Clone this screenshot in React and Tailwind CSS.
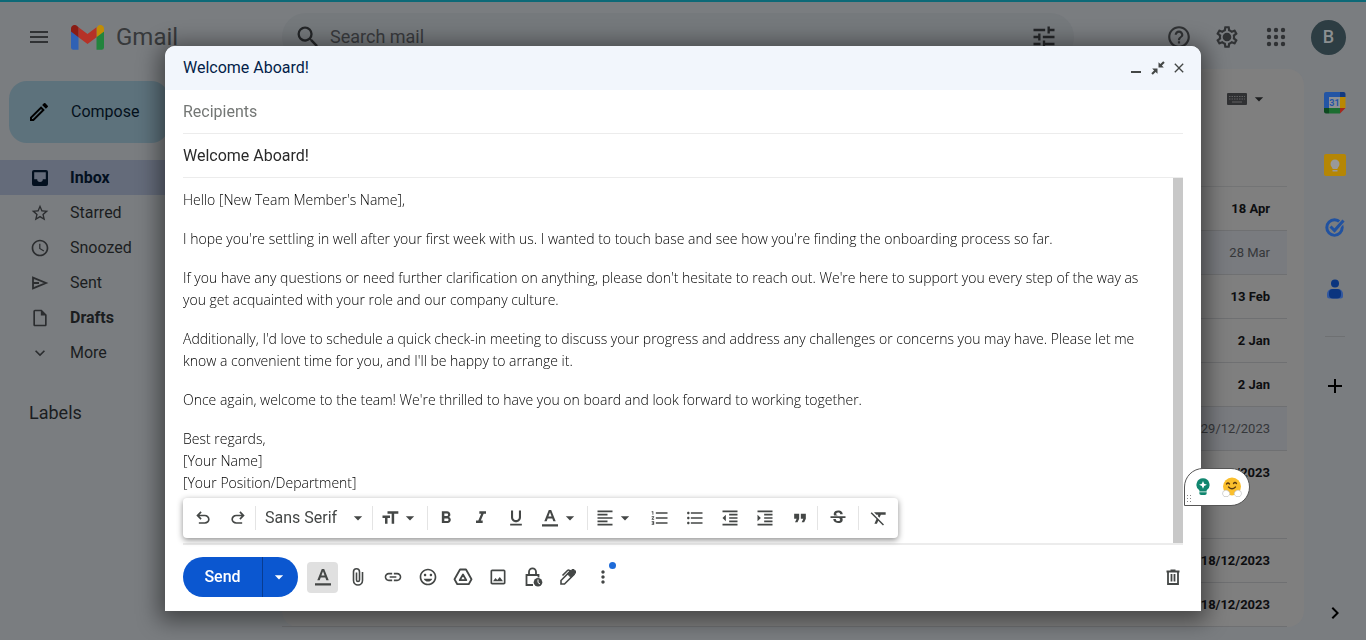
import React from 'react';
import {
  MdMenu, MdSearch, MdTune, MdHelpOutline, MdOutlineSettings, MdStarBorder, MdAccessTime,
  MdOutlineInsertDriveFile, MdExpandMore, MdOutlineModeEdit, MdArrowDropDown,
  MdAdd, MdChevronRight, MdClose, MdFormatSize, MdFormatBold, MdFormatItalic, MdFormatUnderlined,
  MdFormatAlignLeft, MdFormatListNumbered, MdFormatListBulleted, MdFormatIndentDecrease,
  MdFormatIndentIncrease, MdFormatQuote, MdStrikethroughS, MdFormatClear, MdInsertLink,
  MdInsertEmoticon, MdOutlineImage, MdMoreVert,
} from 'react-icons/md';

const InboxIcon = ({ className }) => (
  <svg viewBox="0 0 20 20" className={className} fill="currentColor" aria-hidden="true">
    <path fillRule="evenodd" d="M4 2h12a2 2 0 0 1 2 2v12a2 2 0 0 1-2 2H4a2 2 0 0 1-2-2V4a2 2 0 0 1 2-2zM4.200 4.200v7h3a2.800 2.800 0 0 0 5.600 0h3v-7z" />
  </svg>
);

const SendIcon = ({ className }) => (
  <svg viewBox="0 0 20 20" className={className} fill="none" stroke="currentColor" strokeWidth="1.800" aria-hidden="true">
    <path d="M3 4.600L16 10 3 15.400zM3 10h6" />
  </svg>
);

const navItems = [
  { label: 'Inbox', icon: InboxIcon, active: true, bold: true },
  { label: 'Starred', icon: MdStarBorder },
  { label: 'Snoozed', icon: MdAccessTime },
  { label: 'Sent', icon: SendIcon },
  { label: 'Drafts', icon: MdOutlineInsertDriveFile, bold: true },
  { label: 'More', icon: MdExpandMore },
];

const mails = [
  { date: '18 Apr', unread: true },
  { date: '28 Mar' },
  { date: '13 Feb', unread: true },
  { date: '2 Jan', unread: true },
  { date: '2 Jan', unread: true },
  { date: '29/12/2023' },
  { date: '20/12/2023', unread: true, tall: true },
  { date: '18/12/2023', unread: true },
  { date: '18/12/2023', unread: true },
];

const GmailLogo = () => (
  <svg viewBox="0 0 33 25" className="h-[25px] w-[33px]" aria-hidden="true">
    <path d="M0 6v16.500A2.300 2.300 0 0 0 2.300 24.700H7.500V11.500z" fill="#2f61b5" />
    <path d="M33 6v16.500a2.300 2.300 0 0 1-2.300 2.200H25.500V11.500z" fill="#22843d" />
    <path d="M25.500 3v9.200L33 6.500V3.500C33 .5 29.600-1.100 27.200.700z" fill="#c18d06" />
    <path d="M7.500 12.200V2.200l9 6.700 9-6.700v10l-9 6.800z" fill="#b53227" />
    <path d="M0 3.500v3l7.500 5.700V2.200L5.800.700C3.400-1.100 0 .5 0 3.500z" fill="#8a1c14" />
  </svg>
);

const CalendarIcon = () => (
  <svg viewBox="0 0 22 22" className="size-[22px]" aria-hidden="true">
    <path d="M0 2a2 2 0 0 1 2-2h14v5H5v12H0z" fill="#2355a5" />
    <path d="M16 0h3.500A2 2 0 0 1 21.500 2v3H16z" fill="#133a80" />
    <path d="M16 5h5.500v11H16z" fill="#b98804" />
    <path d="M5 16h11v5.500H5z" fill="#1b6e31" />
    <path d="M0 16h5v5.500H2a2 2 0 0 1-2-2z" fill="#0d4a20" />
    <path d="M16 16h5.500L16 21.500z" fill="#a5281d" />
    <path d="M5 5h11v11H5z" fill="#8d9094" />
    <text x="10.500" y="14" textAnchor="middle" fontSize="9" fontWeight="700" fill="#2355a5" fontFamily="Roboto, sans-serif">31</text>
  </svg>
);

const KeepIcon = () => (
  <svg viewBox="0 0 22 22" className="size-[22px]" aria-hidden="true">
    <rect width="22" height="22" rx="2" fill="#b58605" />
    <circle cx="11" cy="10" r="4.500" fill="#999" />
    <path d="M8.500 12h5v3h-5zM8.500 16h5v1.500h-5z" fill="#999" />
  </svg>
);

const TasksIcon = () => (
  <svg viewBox="0 0 22 22" className="size-[22px]" fill="none" aria-hidden="true">
    <circle cx="10.500" cy="11.500" r="7.700" stroke="#2152a0" strokeWidth="3" />
    <path d="M6.500 10.500l4 4L19 5" stroke="#7b7d80" strokeWidth="5" />
    <path d="M6.500 10.500l4 4L19.500 4.500" stroke="#2152a0" strokeWidth="3" />
  </svg>
);

const ContactsIcon = () => (
  <svg viewBox="0 0 22 22" className="size-[22px]" aria-hidden="true">
    <circle cx="11" cy="5.500" r="4" fill="#0b357f" />
    <path d="M3 16a5 5 0 0 1 5-5h6a5 5 0 0 1 5 5v2a2.500 2.500 0 0 1-2.500 2.500h-11A2.500 2.500 0 0 1 3 18z" fill="#3258a0" />
    <rect x="5" y="11" width="12" height="9.500" rx="4" fill="#0b357f" />
  </svg>
);

const SettingsIcon = () => (
  <svg viewBox="0 0 24 24" className="size-[26px]" fill="currentColor" aria-hidden="true">
    <MdOutlineSettings size={24} />
    <circle cx="12" cy="12" r="3" />
  </svg>
);

const AppsIcon = () => (
  <svg viewBox="0 0 20 20" className="size-5" fill="currentColor" aria-hidden="true">
    {[3, 10, 17].map((y) => [3, 10, 17].map((x) => <circle key={`${x}-${y}`} cx={x} cy={y} r="2.200" />))}
  </svg>
);

const KeyboardIcon = () => (
  <svg viewBox="0 0 20 12" className="h-3 w-5" aria-hidden="true">
    <rect width="20" height="12" rx="1" fill="#303133" />
    <path d="M2 3.500h16M2 6h16" stroke="#606163" strokeWidth="1" strokeDasharray="1.500 1" />
    <path d="M5 9h10" stroke="#606163" strokeWidth="1" />
  </svg>
);

const UndoIcon = ({ className }) => (
  <svg viewBox="0 -960 960 960" className={className} fill="currentColor" aria-hidden="true">
    <path d="M280-200v-80h284q63 0 109.500-40T720-420q0-60-46.500-100T564-560H312l104 104-56 56-200-200 200-200 56 56-104 104h252q97 0 163.500 63T800-420q0 94-66.500 157T564-200H280Z" />
  </svg>
);

const RedoIcon = ({ className }) => (
  <svg viewBox="0 -960 960 960" className={className} fill="currentColor" aria-hidden="true">
    <path d="M396-200q-97 0-163.500-63T160-420q0-94 66.500-157T396-640h252L544-744l56-56 200 200-200 200-56-56 104-104H396q-63 0-109.500 40T240-420q0 60 46.500 100T396-280h284v80H396Z" />
  </svg>
);

const TextColorIcon = ({ className }) => (
  <svg viewBox="0 0 20 20" className={className} fill="currentColor" aria-hidden="true">
    <path d="M2 16.200h16v2.300H2zM8.800 2h2.400l4.500 11.200h-2.400l-1-2.700H7.700l-1 2.700H4.300zM8.400 8.600h3.200L10 4.300z" />
  </svg>
);

const AttachIcon = ({ className }) => (
  <svg viewBox="0 0 20 20" className={className} fill="none" stroke="currentColor" strokeWidth="1.600" aria-hidden="true">
    <path d="M14.500 5v8.500a4.500 4.500 0 0 1-9 0V4.800a3 3 0 0 1 6 0V13a1.500 1.500 0 0 1-3 0V5.500" />
  </svg>
);

const DriveIcon = ({ className }) => (
  <svg viewBox="0 0 20 20" className={className} fill="none" stroke="currentColor" strokeWidth="1.800" strokeLinejoin="round" aria-hidden="true">
    <path d="M7 2.500h6l5.500 9.700-2.800 5H4.300l-2.800-5z" />
    <path d="M10 7.500l3.300 5.700H6.700z" />
  </svg>
);

const LockClockIcon = ({ className }) => (
  <svg viewBox="0 0 20 20" className={className} fill="none" stroke="currentColor" strokeWidth="1.800" aria-hidden="true">
    <path d="M10 18H3.500V8h12v2.500M6 8V4.800a3.500 3.500 0 0 1 7 0V8" />
    <circle cx="15" cy="15.300" r="4.300" fill="currentColor" stroke="none" />
    <path d="M15 12.500v3l2 1.500" stroke="#fff" strokeWidth="1" />
  </svg>
);

const PenIcon = ({ className }) => (
  <svg viewBox="0 0 20 20" className={className} fill="none" stroke="currentColor" aria-hidden="true">
    <path d="M3 17v-3.500L12.500 4l3.500 3.500L6.500 17z" strokeWidth="1.600" />
    <path d="M9.500 7l4.500-4.500h2L17.500 4v2L13 10.500z" fill="currentColor" strokeWidth="1" />
    <path d="M4.500 8.500l5-5q1-1 2 0l1 1" strokeWidth="1.600" />
  </svg>
);

const TrashIcon = ({ className }) => (
  <svg viewBox="0 0 20 20" className={className} fill="none" stroke="currentColor" strokeWidth="1.800" aria-hidden="true">
    <path d="M3.500 4.500h13M7.500 3.300h5M5 4.500V17h10V4.500M8.500 7v7.500M11.500 7v7.500" />
  </svg>
);

const ExitFullscreenIcon = () => (
  <svg viewBox="0 0 14 14" className="size-[14px]" fill="currentColor" aria-hidden="true">
    <path d="M7.500 6.500V1.200l1.900 1.900L12.200.3l1.500 1.500-2.800 2.800 1.900 1.900zM6.500 7.500v5.300l-1.900-1.900-2.800 2.800L.3 12.200l2.800-2.800-1.900-1.900z" />
  </svg>
);

const BulbIcon = () => (
  <svg viewBox="0 0 16 20" className="h-[18px] w-[14px]" aria-hidden="true">
    <path d="M8 0a7.500 7.500 0 0 1 4.200 13.700V15H3.800v-1.300A7.500 7.500 0 0 1 8 0z" fill="#11866f" />
    <path d="M3.800 16h8.400v1a2 2 0 0 1-2 2H5.800a2 2 0 0 1-2-2z" fill="#11866f" />
    <path d="M8 3l1.300 3.200L12.500 7.500 9.300 8.800 8 12 6.700 8.800 3.500 7.500l3.200-1.300z" fill="#fff" />
  </svg>
);

const HugIcon = () => (
  <svg viewBox="0 0 20 20" className="size-5" aria-hidden="true">
    <circle cx="10" cy="9.500" r="9" fill="#fbbf2c" />
    <path d="M4.500 7q1.500-2 3 0M11.500 6.500q1.500-2 3 0M6.500 10q3.500 3.500 7 0" stroke="#5a3a10" strokeWidth="1.300" fill="none" strokeLinecap="round" />
    <path d="M1 14.500q3-3 6 0l1 2.500-2 2.500H2L.5 17zM19 14.500q-3-3-6 0L12 17l2 2.500h4l1.500-2.500z" fill="#fff" stroke="#bbb" strokeWidth=".6" />
  </svg>
);

const ToolButton = ({ label, icon: Icon, dropdown, width = 'w-[35px]' }) => (
  <button type="button" aria-label={label} className={`flex h-8 shrink-0 items-center justify-center ${width}`}>
    <Icon className="size-5 shrink-0" />
    {dropdown && <MdArrowDropDown className="size-5 shrink-0" />}
  </button>
);

const Divider = () => <span className="h-6 w-px shrink-0 bg-[#e4e4e4]" />;

const Header = () => (
  <header className="flex h-[67px] shrink-0 items-center pt-[3px] pr-5 text-[#303234]">
    <div className="flex w-[282px] shrink-0 items-center pl-[27px]">
      <button type="button" aria-label="Main menu"><MdMenu className="size-6" /></button>
      <a href="#gmail" className="ml-5 flex items-center gap-3 text-2xl text-[#37393b]">
        <GmailLogo />
        Gmail
      </a>
    </div>
    <form className="flex h-12 w-[792px] items-center rounded-full bg-[#75797c] px-3">
      <button type="button" aria-label="Search"><MdSearch className="size-7 text-[#242628]" /></button>
      <input aria-label="Search mail" placeholder="Search mail" className="ml-2 min-w-0 flex-1 bg-transparent text-lg placeholder:text-[#393b3e]" />
      <button type="button" aria-label="Search options" className="mr-1"><MdTune className="size-7 text-[#242628]" /></button>
    </form>
    <div className="ml-auto flex items-center">
      <button type="button" aria-label="Support"><MdHelpOutline className="size-[26px]" /></button>
      <button type="button" aria-label="Settings" className="ml-[22px]"><SettingsIcon /></button>
      <button type="button" aria-label="Google apps" className="ml-[26px]"><AppsIcon /></button>
      <button type="button" aria-label="Account" className="ml-[25px] size-[35px] rounded-full bg-[#2d3d43] text-lg font-medium text-[#8b8f91]">B</button>
    </div>
  </header>
);

const Sidebar = () => (
  <aside className="w-[282px] shrink-0 text-[#1b1d1f]">
    <button type="button" className="mt-3 ml-[9px] flex h-[62px] w-[160px] items-center rounded-[18px] bg-[#5d727c] pl-[18px] text-base text-[#04101b]">
      <MdOutlineModeEdit className="mr-5 size-6 stroke-current text-black" />
      Compose
    </button>
    <nav className="mt-[17px]">
      {navItems.map(({ label, icon: Icon, active, bold }) => (
        <a
          key={label}
          href={`#${label.toLowerCase()}`}
          className={`flex h-[35px] items-center gap-5 rounded-r-full pl-[30px] text-base ${active ? 'bg-[#646b7a] text-[#03101f]' : ''} ${bold ? 'font-bold' : ''}`}
        >
          <Icon className={`size-5 ${active ? 'text-[#03101f]' : 'text-[#2b2d2f]'}`} />
          {label}
        </a>
      ))}
    </nav>
    <h2 className="mt-[29px] pl-[29px] text-lg">Labels</h2>
  </aside>
);

const MailList = () => (
  <main className="mr-[62px] mb-[14px] flex-1 rounded-2xl bg-[#7f7f7f]">
    <div className="mr-[17px] flex h-[118px] items-start justify-end border-b border-[#737475] pt-5 pr-[18px] text-[#1e1f20]">
      <button type="button" aria-label="Input tools" className="flex items-center gap-[2px]"><KeyboardIcon /><MdArrowDropDown className="size-5" /></button>
    </div>
    <table className="w-full border-separate border-spacing-0 pr-[17px] text-[13px]">
      <tbody>
        {mails.map(({ date, unread, tall }, i) => (
          <tr key={i} className={unread ? 'font-bold text-[#0d0e10]' : 'bg-[#797b7f] text-[#35373a]'}>
            <td className={`border-b border-[#6f7072] pr-[17px] text-right align-top leading-[43px] ${tall ? 'h-[88px]' : 'h-[44px]'}`}>{date}</td>
          </tr>
        ))}
      </tbody>
    </table>
  </main>
);

const SidePanel = () => (
  <aside className="absolute top-[90px] right-0 bottom-4 flex w-[62px] flex-col items-center">
    <a href="#calendar" aria-label="Calendar"><CalendarIcon /></a>
    <a href="#keep" aria-label="Keep" className="mt-10"><KeepIcon /></a>
    <a href="#tasks" aria-label="Tasks" className="mt-10"><TasksIcon /></a>
    <a href="#contacts" aria-label="Contacts" className="mt-10"><ContactsIcon /></a>
    <span className="mt-9 h-px w-5 bg-[#6e7072]" />
    <button type="button" aria-label="Get add-ons" className="mt-[37px]"><MdAdd className="size-6" /></button>
    <button type="button" aria-label="Hide side panel" className="mt-auto"><MdChevronRight className="size-6" /></button>
  </aside>
);

const FormatBar = () => (
  <div className="absolute bottom-[5px] left-0 flex h-10 w-[715px] items-center rounded-sm bg-white px-[2px] text-[#444746] shadow-[0_2px_6px_rgba(0,0,0,0.45)]">
    <ToolButton label="Undo" icon={UndoIcon} />
    <ToolButton label="Redo" icon={RedoIcon} />
    <span className="w-[2px]" />
    <Divider />
    <button type="button" className="flex h-8 w-[116px] shrink-0 items-center justify-between pr-1 pl-[9px] text-base">
      Sans Serif
      <MdArrowDropDown className="size-5" />
    </button>
    <Divider />
    <ToolButton label="Size" icon={MdFormatSize} dropdown width="w-[54px]" />
    <Divider />
    <ToolButton label="Bold" icon={MdFormatBold} />
    <ToolButton label="Italic" icon={MdFormatItalic} />
    <ToolButton label="Underline" icon={MdFormatUnderlined} />
    <ToolButton label="Text colour" icon={TextColorIcon} dropdown width="w-[54px]" />
    <Divider />
    <ToolButton label="Align" icon={MdFormatAlignLeft} dropdown width="w-[54px]" />
    <ToolButton label="Numbered list" icon={MdFormatListNumbered} />
    <ToolButton label="Bulleted list" icon={MdFormatListBulleted} />
    <ToolButton label="Indent less" icon={MdFormatIndentDecrease} />
    <ToolButton label="Indent more" icon={MdFormatIndentIncrease} />
    <ToolButton label="Quote" icon={MdFormatQuote} />
    <Divider />
    <ToolButton label="Strikethrough" icon={MdStrikethroughS} width="w-10" />
    <Divider />
    <ToolButton label="Remove formatting" icon={MdFormatClear} width="w-10" />
  </div>
);

const ComposeDialog = () => (
  <section role="dialog" aria-label="Welcome Aboard!" className="flex w-full flex-col rounded-t-[10px] bg-white shadow-[0_4px_22px_6px_rgba(0,0,0,0.45)]">
    <div className="flex h-11 shrink-0 items-center rounded-t-[10px] bg-[#f2f6fc] pr-[14px] pl-[18px] text-[#444746]">
      <h1 className="text-base text-[#041e49]">Welcome Aboard!</h1>
      <button type="button" aria-label="Minimise" className="ml-auto flex h-[14px] w-[10px] items-end pb-[2px]"><span className="h-[2px] w-full bg-current" /></button>
      <button type="button" aria-label="Exit full screen" className="ml-[10px]"><ExitFullscreenIcon /></button>
      <button type="button" aria-label="Close" className="ml-[6px]"><MdClose className="size-4 stroke-current" /></button>
    </div>
    <div className="flex flex-1 flex-col px-[18px] pb-[14px]">
      <input aria-label="Recipients" placeholder="Recipients" className="h-11 w-full shrink-0 border-b border-[#ececec] text-base placeholder:text-[#747775]" />
      <input aria-label="Subject" defaultValue="Welcome Aboard!" className="h-11 w-full shrink-0 border-b border-[#ececec] text-base text-[#2a2a2a]" />
      <div className="relative flex flex-1 border-b-2 border-[#ececec]">
        <div className="flex-1 space-y-[17px] pt-[11px] pr-4 font-['Open_Sans','Noto_Sans',sans-serif] text-sm leading-[22px] font-light text-black">
          <p>Hello [New Team Member's Name],</p>
          <p>I hope you're settling in well after your first week with us. I wanted to touch base and see how you're finding the onboarding process so far.</p>
          <p>If you have any questions or need further clarification on anything, please don't hesitate to reach out. We're here to support you every step of the way as you get acquainted with your role and our company culture.</p>
          <p>Additionally, I'd love to schedule a quick check-in meeting to discuss your progress and address any challenges or concerns you may have. Please let me know a convenient time for you, and I'll be happy to arrange it.</p>
          <p>Once again, welcome to the team! We're thrilled to have you on board and look forward to working together.</p>
          <p>Best regards,<br />[Your Name]<br />[Your Position/Department]</p>
        </div>
        <span className="w-[10px] bg-[#c8c8c8]" />
        <FormatBar />
      </div>
      <div className="mt-3 flex h-10 shrink-0 items-center text-[#444746]">
        <div className="flex h-10 overflow-hidden rounded-full bg-[#0b57d0] text-white">
          <button type="button" className="w-20 border-r border-[#083c91] text-base font-medium">Send</button>
          <button type="button" aria-label="More send options" className="flex w-[35px] items-center pl-[6px]"><MdArrowDropDown className="size-5" /></button>
        </div>
        <button type="button" aria-label="Formatting options" className="mr-[2px] ml-[9px] flex size-[31px] items-center justify-center rounded-sm bg-[#e0e0e0]"><TextColorIcon className="size-5" /></button>
        <ToolButton label="Attach files" icon={AttachIcon} />
        <ToolButton label="Insert link" icon={MdInsertLink} />
        <ToolButton label="Insert emoji" icon={MdInsertEmoticon} />
        <ToolButton label="Insert from Drive" icon={DriveIcon} />
        <ToolButton label="Insert photo" icon={MdOutlineImage} />
        <ToolButton label="Confidential mode" icon={LockClockIcon} />
        <ToolButton label="Insert signature" icon={PenIcon} />
        <div className="relative">
          <ToolButton label="More options" icon={MdMoreVert} />
          <span className="absolute top-[1px] right-1 size-[7px] rounded-full bg-[#1f6bd8]" />
        </div>
        <button type="button" aria-label="Discard draft" className="ml-auto"><TrashIcon className="size-5" /></button>
      </div>
    </div>
  </section>
);

const AssistantBadge = () => (
  <div className="fixed top-[468px] right-[116px] z-20 flex h-[38px] w-[66px] items-center justify-center gap-3 rounded-[19px] rounded-bl-none border border-[#555] bg-white pl-1">
    <svg viewBox="0 0 6 8" className="absolute bottom-[2px] left-[2px] h-2 w-[6px]" fill="#888" aria-hidden="true">
      <path d="M0 0h1v1H0zM3 0h1v1H3zM0 3h1v1H0zM3 3h1v1H3zM0 6h1v1H0zM3 6h1v1H3z" />
    </svg>
    <button type="button" aria-label="Suggestions"><BulbIcon /></button>
    <button type="button" aria-label="Tone"><HugIcon /></button>
  </div>
);

const App = () => {
  return (
    <div className="relative flex min-h-screen flex-col overflow-hidden border-t-2 border-[#0d6977] bg-[#7a7d80] font-[Roboto,sans-serif]">
      <Header />
      <div className="flex flex-1">
        <Sidebar />
        <MailList />
      </div>
      <SidePanel />
      <div className="fixed inset-0 z-10 flex px-[165px] pt-[46px] pb-[29px]">
        <ComposeDialog />
      </div>
      <AssistantBadge />
    </div>
  );
};

export default App;
